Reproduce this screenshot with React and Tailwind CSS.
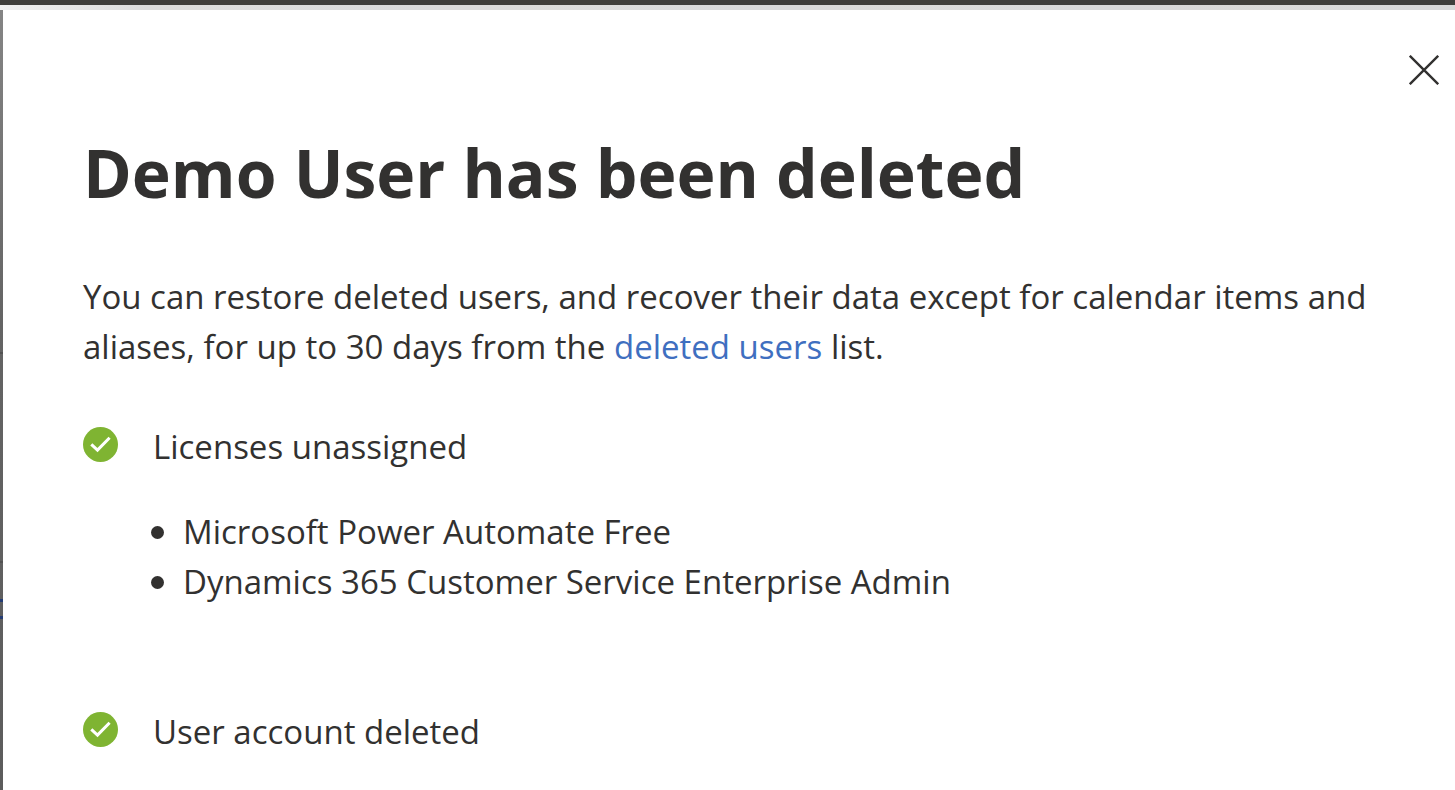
import { useState } from 'react'

const LICENSES = ['Microsoft Power Automate Free', 'Dynamics 365 Customer Service Enterprise Admin']

export default function App() {
  const [open, setOpen] = useState(true)

  return (
    <div className="min-h-screen flex flex-col bg-[#5f5f5f] font-['Open_Sans',sans-serif] text-[#323130]">
      <div className="h-[5px] bg-[#3f3e3b]" />
      <div className="h-[5px] bg-linear-to-r from-[#f0f0f0] via-[#dcdcdc] via-10% to-[#d8d8d8]" />
      {open && (
        <div className="flex flex-1">
          <PageEdge />
          <main className="relative flex-1 bg-white pl-20 pr-16 pt-[126px]">
            <CloseButton onClick={() => setOpen(false)} />
            <h1 className="text-[66px] leading-[72px] font-bold">Demo User has been deleted</h1>
            <p className="mt-16 text-[33px] leading-[50px]">
              You can restore deleted users, and recover their data except for calendar items and aliases, for up to 30
              days from the{' '}
              <a href="#deleted-users" className="text-[#3f6fc0] hover:underline">deleted users</a> list.
            </p>
            <StatusRow className="mt-[50px]">Licenses unassigned</StatusRow>
            <ul className="mt-[35px] ml-[68px] text-[33px] leading-[50px]">
              {LICENSES.map(name => (
                <li key={name} className="flex items-center gap-[19px]">
                  <span className="size-[13px] rounded-full bg-[#323130]" />
                  {name}
                </li>
              ))}
            </ul>
            <StatusRow className="mt-[100px]">User account deleted</StatusRow>
          </main>
        </div>
      )}
    </div>
  )
}

// Sliver of the dimmed page that stays visible beside the panel
function PageEdge() {
  return (
    <div className="w-[3px] bg-linear-to-b from-[#858585] via-[#646464] via-40% to-[#5c5c5c]">
      <div className="mt-[342px] h-[2px] bg-[#525252]" />
      <div className="mt-[207px] h-[2px] bg-[#525252]" />
      <div className="mt-[36px] h-[3px] bg-[#243c74]" />
      <div className="mt-[14px] h-[3px] bg-[#243c74]" />
    </div>
  )
}

function StatusRow({ className, children }) {
  return (
    <div className={`flex items-start gap-[35px] text-[33px] leading-[50px] ${className}`}>
      <CheckIcon className="mt-[5px] size-[35px] shrink-0" />
      <h2>{children}</h2>
    </div>
  )
}

function CloseButton({ onClick }) {
  return (
    <button type="button" aria-label="Close" onClick={onClick} className="absolute right-4 top-[45px] cursor-pointer">
      <svg className="size-[30px]" viewBox="0 0 30 30" fill="none" stroke="currentColor" strokeWidth={2.4}>
        <path d="M0.8 0.8 29.2 29.2M29.2 0.8 0.8 29.2" />
      </svg>
    </button>
  )
}

function CheckIcon({ className }) {
  return (
    <svg className={className} viewBox="0 0 35 35" fill="none">
      <circle cx="17.5" cy="17.5" r="17.5" fill="#7fb432" />
      <path d="m8.3 17.3 6.2 5.8L26.6 10.8" stroke="#fff" strokeWidth={3} />
    </svg>
  )
}
